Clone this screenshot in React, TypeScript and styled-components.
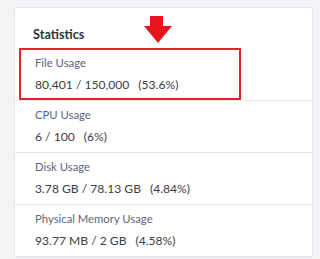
import styled, {createGlobalStyle} from "styled-components";

const GlobalStyle = createGlobalStyle`
  html, body {
    margin: 0;
    padding: 0;
    background: #f3f4f6;
    font-family: Lato, "Open Sans", "Liberation Sans", sans-serif;
  }
`;

const Page = styled.div`
  padding: 7px 7px 0 14px;
  height: 259px;
  overflow: hidden;
  box-sizing: border-box;
`;

const Card = styled.div`
  position: relative;
  background: #ffffff;
  border: 1px solid #e6e8eb;
  border-radius: 3px;
  box-sizing: border-box;
`;

const Title = styled.h3`
  margin: 0;
  padding: 17px 18px 6px;
  font-size: 12.7px;
  line-height: 18px;
  font-weight: 700;
  color: #2e333d;
`;

const Row = styled.div<{ $highlight?: boolean }>`
  position: relative;
  display: flex;
  flex-direction: column;
  gap: 4px;
  padding: 6px 20px 5px;
  border-bottom: 1px solid #e6e7ea;

  ${({$highlight}) => $highlight && `
    &::after {
      content: "";
      position: absolute;
      left: 4px;
      top: -1px;
      width: 222px;
      height: 52px;
      border: 2px solid #e3232b;
      box-sizing: border-box;
    }
  `}
`;

const Label = styled.span`
  font-size: 11.3px;
  line-height: 16px;
  color: #5e6679;
`;

const Value = styled.span`
  font-size: 12.1px;
  line-height: 20px;
  color: #3b3e45;
`;

const Percent = styled.span`
  margin-left: 9px;
`;

const Arrow = styled.svg`
  position: absolute;
  left: 129px;
  top: 8px;
`;

type Stat = {
    label: string;
    value: string;
    percent: string;
};

const stats: Stat[] = [
    {label: "File Usage", value: "80,401 / 150,000", percent: "(53.6%)"},
    {label: "CPU Usage", value: "6 / 100", percent: "(6%)"},
    {label: "Disk Usage", value: "3.78 GB / 78.13 GB", percent: "(4.84%)"},
    {label: "Physical Memory Usage", value: "93.77 MB / 2 GB", percent: "(4.58%)"},
];

export default function App() {
    return (
        <Page>
            <GlobalStyle/>
            <Card>
                <Title>Statistics</Title>
                {stats.map((stat, index) => (
                    <Row key={stat.label} $highlight={index === 0}>
                        <Label>{stat.label}</Label>
                        <Value>
                            {stat.value}
                            <Percent>{stat.percent}</Percent>
                        </Value>
                    </Row>
                ))}
                <Arrow width="28" height="27" viewBox="0 0 28 27">
                    <polygon points="6,0 19,0 19,10 28,10 14,27 0,10 6,10" fill="#e8141e"/>
                </Arrow>
            </Card>
        </Page>
    );
}
